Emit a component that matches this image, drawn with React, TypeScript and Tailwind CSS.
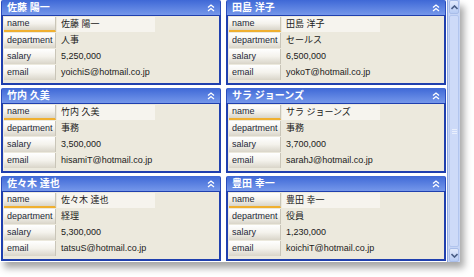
import React from "react";

type Person = { name: string; dept: string; salary: string; email: string };

const people: Person[] = [
  { name: "佐藤 陽一", dept: "人事", salary: "5,250,000", email: "yoichiS@hotmail.co.jp" },
  { name: "田島 洋子", dept: "セールス", salary: "6,500,000", email: "yokoT@hotmail.co.jp" },
  { name: "竹内 久美", dept: "事務", salary: "3,500,000", email: "hisamiT@hotmail.co.jp" },
  { name: "サラ ジョーンズ", dept: "事務", salary: "3,700,000", email: "sarahJ@hotmail.co.jp" },
  { name: "佐々木 達也", dept: "経理", salary: "5,300,000", email: "tatsuS@hotmail.co.jp" },
  { name: "豊田 幸一", dept: "役員", salary: "1,230,000", email: "koichiT@hotmail.co.jp" },
];

const FONT = { fontFamily: '"Liberation Sans", Tahoma, "Noto Sans CJK JP", sans-serif' };

function Chevrons() {
  return (
    <svg width="8" height="8" viewBox="0 0 8 8" className="block">
      <polyline points="1,3.5 4,1 7,3.5" fill="none" stroke="white" strokeWidth="1.3" />
      <polyline points="1,7 4,4.5 7,7" fill="none" stroke="white" strokeWidth="1.3" />
    </svg>
  );
}

function Row({ label, value, first }: { label: string; value: string; first?: boolean }) {
  return (
    <div className="flex h-[16px] items-stretch">
      <div
        className={`ml-[1px] w-[52px] h-[15px] flex items-center pl-[3px] text-[9px] text-[#1e2838] bg-gradient-to-b from-[#ffffff] via-[#f4f2ec] to-[#d9d5c9] border-r border-[#c9c5b8] ${
          first ? "border-b-2 border-b-[#f0b030]" : ""
        }`}
      >
        {label}
      </div>
      <div
        className={`h-[15px] flex items-center pl-[4px] text-[9px] text-[#1a1a1a] ${
          first ? "w-[98px] ml-[1px] bg-[#f6f4ee]" : "ml-[1px]"
        }`}
      >
        {value}
      </div>
    </div>
  );
}

function Panel({ p }: { p: Person }) {
  return (
    <div className="flex flex-col h-[85px]">
      <div className="h-[15px] flex items-center justify-between pl-[5px] pr-[5px] rounded-t-[2px] bg-gradient-to-b from-[#3f68d6] to-[#7597ea] border-x border-[#2a4cbc]">
        <span className="text-white font-bold text-[10px] leading-none">{p.name}</span>
        <Chevrons />
      </div>
      <div className="flex-1 border-2 border-t border-[#1f3fae] bg-[#ece9dd] pt-[1px]">
        <Row label="name" value={p.name} first />
        <Row label="department" value={p.dept} />
        <Row label="salary" value={p.salary} />
        <Row label="email" value={p.email} />
      </div>
    </div>
  );
}

function ScrollArrow({ up }: { up?: boolean }) {
  return (
    <div className="h-[14px] mx-[1px] rounded-[2px] border border-[#a9bde8] bg-gradient-to-b from-[#e2eafc] to-[#b7cbf4] flex items-center justify-center">
      <svg width="7" height="5" viewBox="0 0 7 5">
        <polyline
          points={up ? "0.5,4 3.5,1 6.5,4" : "0.5,1 3.5,4 6.5,1"}
          fill="none"
          stroke="#4a5e86"
          strokeWidth="1.6"
        />
      </svg>
    </div>
  );
}

export default function App() {
  return (
    <div className="w-[474px] h-[277px] bg-white" style={FONT}>
      <div className="w-[460px] h-[262px] flex bg-white shadow-[4px_6px_7px_rgba(0,0,0,0.35)]">
        <div className="pl-[1px] grid grid-cols-[220px_220px] gap-x-[5px] gap-y-[3px] content-start">
          {people.map((p, i) => (
            <Panel key={i} p={p} />
          ))}
        </div>
        <div className="ml-[1px] w-[13px] h-[262px] flex flex-col bg-[#c6d5f6] border-l border-[#8ea6de]">
          <ScrollArrow up />
          <div className="flex-1 mx-[1px] my-[1px] rounded-[2px] bg-[#cddaf8] border border-[#b2c5ee] flex items-center justify-center">
            <div className="flex flex-col gap-[1px]">
              <div className="w-[5px] h-[1px] bg-[#e9effd]" />
              <div className="w-[5px] h-[1px] bg-[#e9effd]" />
              <div className="w-[5px] h-[1px] bg-[#e9effd]" />
            </div>
          </div>
          <ScrollArrow />
        </div>
      </div>
    </div>
  );
}
